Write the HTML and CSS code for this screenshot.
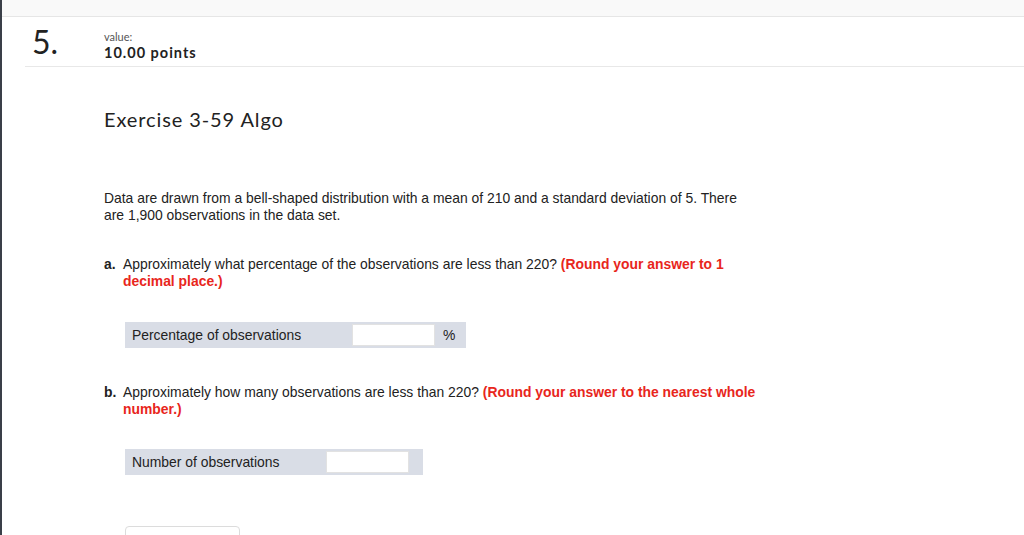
FILE: index.html
```html
<!DOCTYPE html>
<html lang="en">
  <head>
    <meta charset="UTF-8" />
    <meta name="viewport" content="width=device-width, initial-scale=1.0" />
    <title>Question 5</title>
    <link rel="stylesheet" href="styles.css">
  </head>
  <body>
    <div class="topbar"></div>

    <div class="page">
      <div class="question-head">
        <div class="number">5.</div>
        <div class="value">
          <div class="value-label">value:</div>
          <div class="value-points">10.00 points</div>
        </div>
      </div>

      <div class="question-body">
        <h2 class="exercise-title">Exercise 3-59 Algo</h2>

        <p class="intro">
          Data are drawn from a bell-shaped distribution with a mean of 210 and a standard deviation of 5. There
          are 1,900 observations in the data set.
        </p>

        <div class="part part-a">
          <div class="part-letter">a.</div>
          <div class="part-text">
            Approximately what percentage of the observations are less than 220?
            <span class="hint">(Round your answer to 1 decimal place.)</span>
          </div>
        </div>

        <div class="answer-row row-a">
          <div class="answer-label label-a">Percentage of observations</div>
          <input class="answer-input" type="text">
          <div class="answer-unit">%</div>
        </div>

        <div class="part part-b">
          <div class="part-letter">b.</div>
          <div class="part-text">
            Approximately how many observations are less than 220?
            <span class="hint">(Round your answer to the nearest whole number.)</span>
          </div>
        </div>

        <div class="answer-row row-b">
          <div class="answer-label label-b">Number of observations</div>
          <input class="answer-input" type="text">
          <div class="answer-pad"></div>
        </div>

        <div class="next-box"></div>
      </div>
    </div>
  </body>
</html>
```

FILE: styles.css
```css
* {
  margin: 0;
  padding: 0;
  box-sizing: border-box;
}

html,
body {
  height: 100%;
  overflow: hidden;
}

body {
  background-color: white;
  border-left: 2px solid #3a3f48;
  font-family: "Liberation Sans", Arial, sans-serif;
  color: #333;
}

.topbar {
  height: 17px;
  background-color: #f9f9f9;
  border-bottom: 1px solid #e6e6e6;
}

.page {
  padding-left: 23px;
}

.question-head {
  display: flex;
  align-items: flex-start;
  height: 50px;
  border-bottom: 1px solid #e8e8e8;
  padding-top: 9px;
}

.number {
  width: 79px;
  padding-left: 7px;
  font-family: Lato, "Open Sans", sans-serif;
  font-size: 32px;
  font-weight: 400;
  line-height: 32px;
  color: #222;
}

.value {
  padding-top: 5px;
  font-family: Lato, "Open Sans", sans-serif;
}

.value-label {
  font-size: 11px;
  line-height: 12px;
  color: #555;
}

.value-points {
  font-size: 14.5px;
  font-weight: 700;
  line-height: 19px;
  letter-spacing: 1px;
  color: #222;
}

.question-body {
  padding-left: 79px;
}

.exercise-title {
  margin-top: 40px;
  font-family: Lato, "Open Sans", sans-serif;
  font-size: 20px;
  font-weight: 400;
  letter-spacing: 0.9px;
  line-height: 24px;
  color: #222;
}

.intro {
  margin-top: 59px;
  width: 640px;
  font-size: 13.9px;
  line-height: 17px;
  color: #222;
}

.part {
  display: flex;
  width: 662px;
  font-size: 13.9px;
  line-height: 17px;
  color: #222;
}

.part-a {
  margin-top: 32px;
}

.part-b {
  margin-top: 36px;
}

.part-letter {
  width: 19px;
  font-weight: 700;
}

.part-text {
  flex: 1;
}

.hint {
  color: #e8261c;
  font-weight: 700;
}

.answer-row {
  display: flex;
  width: max-content;
  align-items: center;
  margin-left: 21px;
  height: 26px;
  background-color: #d9dde6;
  font-size: 13.9px;
  color: #222;
}

.row-a {
  margin-top: 32px;
}

.row-b {
  margin-top: 31px;
}

.answer-label {
  padding-left: 7px;
}

.label-a {
  width: 227px;
}

.label-b {
  width: 201px;
}

.answer-input {
  width: 83px;
  height: 22px;
  border: 1px solid #e2e2e2;
  background-color: white;
  outline: none;
}

.answer-unit {
  width: 31px;
  padding-left: 8px;
}

.answer-pad {
  width: 14px;
}

.next-box {
  margin-top: 51px;
  margin-left: 21px;
  width: 115px;
  height: 30px;
  border: 1px solid #dcdcdc;
  border-radius: 4px;
}
```
